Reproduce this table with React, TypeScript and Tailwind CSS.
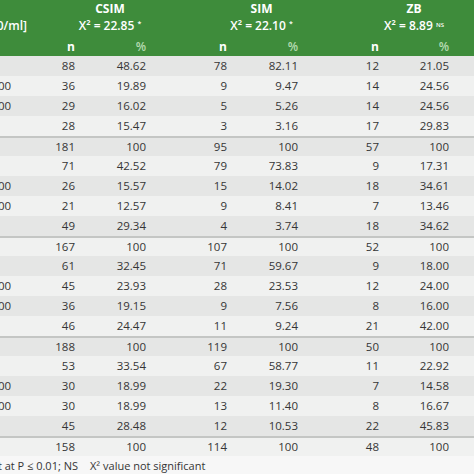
const groups = [
  {
    rows: [
      ['≤ 100', '88', '48.62', '78', '82.11', '12', '21.05'],
      ['100 – 200', '36', '19.89', '9', '9.47', '14', '24.56'],
      ['200 – 400', '29', '16.02', '5', '5.26', '14', '24.56'],
      ['> 400', '28', '15.47', '3', '3.16', '17', '29.83'],
    ],
    total: ['Total', '181', '100', '95', '100', '57', '100'],
  },
  {
    rows: [
      ['≤ 100', '71', '42.52', '79', '73.83', '9', '17.31'],
      ['100 – 200', '26', '15.57', '15', '14.02', '18', '34.61'],
      ['200 – 400', '21', '12.57', '9', '8.41', '7', '13.46'],
      ['> 400', '49', '29.34', '4', '3.74', '18', '34.62'],
    ],
    total: ['Total', '167', '100', '107', '100', '52', '100'],
  },
  {
    rows: [
      ['≤ 100', '61', '32.45', '71', '59.67', '9', '18.00'],
      ['100 – 200', '45', '23.93', '28', '23.53', '12', '24.00'],
      ['200 – 400', '36', '19.15', '9', '7.56', '8', '16.00'],
      ['> 400', '46', '24.47', '11', '9.24', '21', '42.00'],
    ],
    total: ['Total', '188', '100', '119', '100', '50', '100'],
  },
  {
    rows: [
      ['≤ 100', '53', '33.54', '67', '58.77', '11', '22.92'],
      ['100 – 200', '30', '18.99', '22', '19.30', '7', '14.58'],
      ['200 – 400', '30', '18.99', '13', '11.40', '8', '16.67'],
      ['> 400', '45', '28.48', '12', '10.53', '22', '45.83'],
    ],
    total: ['Total', '158', '100', '114', '100', '48', '100'],
  },
];

const cols = 'grid grid-cols-[94px_51px_71px_81px_71px_81px_71px]';

function Row({ cells, even, total }: { cells: string[]; even: boolean; total?: boolean }) {
  return (
    <div
      className={`${cols} h-[20px] items-center ${even ? 'bg-[#e5e6e5]' : 'bg-[#f0f1f0]'} ${
        total ? 'border-t-2 border-[#c4c6c4]' : ''
      }`}
    >
      <div className="pl-[20px] whitespace-nowrap">{cells[0]}</div>
      {cells.slice(1).map((c, i) => (
        <div key={i} className={`text-right ${i === 5 ? 'pr-[11px]' : 'pr-[10px]'}`}>
          {c}
        </div>
      ))}
    </div>
  );
}

export default function App() {
  let idx = 0;
  return (
    <div
      className="w-[474px] h-[474px] overflow-hidden bg-[#f4f5f4] text-[#353535] text-[11.5px] leading-none"
      style={{ fontFamily: '"Open Sans", "Noto Sans", sans-serif' }}
    >
      <div className="ml-[-60px] w-[600px]">
        {/* green header */}
        <div className="bg-[#3e8c3b] text-white h-[56px]">
          <div className="grid grid-cols-[94px_152px_151px_154px] h-[17px] items-center font-bold text-[12px]">
            <div />
            <div className="text-center pt-[1px]">CSIM</div>
            <div className="text-center pt-[1px]">SIM</div>
            <div className="text-center pt-[1px]">ZB</div>
          </div>
          <div className="grid grid-cols-[94px_152px_151px_154px] h-[17px] items-center font-semibold text-[12px]">
            <div className="flex justify-end pr-[7px] whitespace-nowrap">
              <span className="shrink-0">SCC [×1000/ml]</span>
            </div>
            <div className="text-center">
              X² = 22.85 <sup className="text-[7px]">*</sup>
            </div>
            <div className="text-center">
              X² = 22.10 <sup className="text-[7px]">*</sup>
            </div>
            <div className="text-center">
              X² = 8.89 <sup className="text-[6px]">NS</sup>
            </div>
          </div>
          <div className={`${cols} h-[22px] items-center pt-[4px] font-bold text-[12px]`}>
            <div />
            {['n', '%', 'n', '%', 'n', '%'].map((h, i) => (
              <div
                key={i}
                className={`text-right ${i === 5 ? 'pr-[11px]' : 'pr-[10px]'} ${
                  h === '%' ? 'text-[#b4dab0] font-semibold' : ''
                }`}
              >
                {h}
              </div>
            ))}
          </div>
        </div>

        {/* body */}
        {groups.map((g, gi) => (
          <div key={gi}>
            {g.rows.map((r, ri) => {
              const even = idx++ % 2 === 0;
              return <Row key={ri} cells={r} even={even} />;
            })}
            <Row cells={g.total} even={idx++ % 2 === 0} total />
          </div>
        ))}

        {/* footnote */}
        <div className="flex h-[18px] items-center text-[11px] bg-[#f7f7f7] whitespace-nowrap">
          <div className="w-[138px] flex justify-end">
            <span className="shrink-0">* X² value significant at P ≤ 0.01; NS</span>
          </div>
          <span className="ml-[12px]">X² value not significant</span>
        </div>
      </div>
    </div>
  );
}
